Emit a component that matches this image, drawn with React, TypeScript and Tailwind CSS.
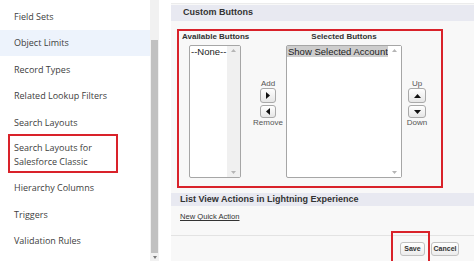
import React from "react";

const sideItems = [
  "Field Sets",
  "Object Limits",
  "Record Types",
  "Related Lookup Filters",
  "Search Layouts",
];
const sideItems2 = ["Hierarchy Columns", "Triggers", "Validation Rules"];

function Tri({ dir }: { dir: "up" | "down" | "left" | "right" }) {
  const pts =
    dir === "up"
      ? "0,4 3.5,0 7,4"
      : dir === "down"
      ? "0,0 3.5,4 7,0"
      : dir === "right"
      ? "0,0 4,3.5 0,7"
      : "4,0 0,3.5 4,7";
  const w = dir === "up" || dir === "down" ? 7 : 4;
  const h = dir === "up" || dir === "down" ? 4 : 7;
  return (
    <svg width={w} height={h} viewBox={`0 0 ${w} ${h}`}>
      <polygon points={pts} fill="#111" />
    </svg>
  );
}

function SmallBtn({ dir, w, h }: { dir: "up" | "down" | "left" | "right"; w: string; h: string }) {
  return (
    <div
      className={`${w} ${h} flex items-center justify-center rounded-[3px] border border-[#a9a9a9] bg-linear-to-b from-white to-[#e6e6e6]`}
    >
      <Tri dir={dir} />
    </div>
  );
}

function ScrollStrip({ gray }: { gray: boolean }) {
  return (
    <div
      className={`w-[13px] h-full flex flex-col items-center justify-between py-[3px] ${
        gray ? "bg-[#f0f0f0]" : "bg-white"
      }`}
    >
      <svg width="5" height="3" viewBox="0 0 5 3">
        <polygon points="0,3 2.5,0 5,3" fill="#b5b5b5" />
      </svg>
      <svg width="5" height="3" viewBox="0 0 5 3">
        <polygon points="0,0 2.5,3 5,0" fill="#b5b5b5" />
      </svg>
    </div>
  );
}

export default function App() {
  return (
    <div className="w-[474px] h-[261px] bg-white flex overflow-hidden">
      {/* Sidebar */}
      <div className="w-[150px] pt-[3px] text-[9px] text-[#404040] font-['Open_Sans',sans-serif]">
        {sideItems.map((t) => (
          <div
            key={t}
            className={`h-[26.5px] flex items-center pl-[14px] ${
              t === "Object Limits" ? "bg-[#edf3fc]" : ""
            }`}
          >
            {t}
          </div>
        ))}
        <div className="h-[40.5px] pl-[8px]">
          <div className="mt-[-1.5px] h-[39px] w-[110px] border-2 border-[#d9222a] pt-[5px] pl-[4px] leading-[14px]">
            <div>Search Layouts for</div>
            <div>Salesforce Classic</div>
          </div>
        </div>
        {sideItems2.map((t) => (
          <div key={t} className="h-[26.5px] flex items-center pl-[14px]">
            {t}
          </div>
        ))}
      </div>

      {/* Sidebar scrollbar */}
      <div className="w-[9px] h-full bg-[#f1f1f1] flex flex-col">
        <div className="h-[40px]" />
        <div className="mx-[1px] h-[213px] bg-[#c1c1c1]" />
        <div className="flex-1 flex items-center justify-center">
          <svg width="4" height="3" viewBox="0 0 4 3">
            <polygon points="0,0 2,3 4,0" fill="#7a7a7a" />
          </svg>
        </div>
      </div>
      <div className="w-[12px]" />

      {/* Main panel */}
      <div className="relative flex-1 mt-[3px] border-t border-[#ececec] bg-[#f8f8f8] font-['Liberation_Sans',Arial,sans-serif] text-[#333]">
        <div className="mt-[1px] h-[16px] bg-[#e8e9f1] flex items-center pl-[12px] text-[9px] font-bold text-[#333]">
          Custom Buttons
        </div>

        {/* Red annotated box */}
        <div className="mt-[8px] ml-[6px] w-[266px] h-[159px] border-2 border-[#d9222a] flex items-start">
          {/* Available */}
          <div className="ml-[3px] w-[71px] flex flex-col">
            <div className="h-[12px] leading-[12px] text-[8px] font-bold whitespace-nowrap text-[#333]">
              Available Buttons
            </div>
            <div className="mt-[2px] ml-[7px] w-[52px] h-[133px] border border-[#a6a6a6] rounded-[2px] bg-white flex">
              <div className="flex-1 text-[9.5px] leading-[11px] pl-[1px] text-[#222]">--None--</div>
              <ScrollStrip gray />
            </div>
          </div>

          {/* Add/Remove */}
          <div className="w-[30px] flex flex-col items-center pt-[48px] text-[8px] text-[#555]">
            <div className="h-[9px] leading-[9px]">Add</div>
            <SmallBtn dir="right" w="w-[16px]" h="h-[15px]" />
            <div className="h-[2px]" />
            <SmallBtn dir="left" w="w-[16px]" h="h-[13px]" />
            <div className="h-[10px] leading-[10px]">Remove</div>
          </div>

          {/* Selected */}
          <div className="ml-[3px] w-[116px] flex flex-col">
            <div className="h-[12px] leading-[12px] text-[8px] font-bold text-center whitespace-nowrap text-[#333]">
              Selected Buttons
            </div>
            <div className="mt-[2px] w-[116px] h-[133px] border border-[#a6a6a6] rounded-[2px] bg-white flex">
              <div className="flex-1">
                <div className="bg-[#cdcdcd] text-[9.5px] leading-[11px] pl-[1px] whitespace-nowrap text-[#222]">
                  Show Selected Account
                </div>
              </div>
              <ScrollStrip gray={false} />
            </div>
          </div>

          {/* Up/Down */}
          <div className="ml-[6px] w-[18px] flex flex-col items-center pt-[48px] text-[8px] text-[#555]">
            <div className="h-[9px] leading-[9px]">Up</div>
            <SmallBtn dir="up" w="w-[18px]" h="h-[15px]" />
            <div className="h-[2px]" />
            <SmallBtn dir="down" w="w-[18px]" h="h-[13px]" />
            <div className="h-[10px] leading-[10px]">Down</div>
          </div>
        </div>

        <div className="mt-[5px] h-[13px] bg-[#e8e9f1] flex items-center pl-[9px] text-[9px] font-bold text-[#333]">
          List View Actions in Lightning Experience
        </div>
        <div className="mt-[5px] h-[12px] flex items-center pl-[9px] text-[7.6px] underline text-[#333]">
          New Quick Action
        </div>
        <div className="mt-[12px] border-t border-[#e3e3e3]" />
        <div className="pt-[6px] flex justify-end pr-[15px] gap-[6px]">
          <div className="w-[25px] h-[14px] flex items-center justify-center rounded-[3px] border border-[#c2c2c2] bg-linear-to-b from-white to-[#ececec] text-[7px] font-bold text-[#333]">
            Save
          </div>
          <div className="w-[28px] h-[14px] flex items-center justify-center rounded-[3px] border border-[#c2c2c2] bg-linear-to-b from-white to-[#ececec] text-[7px] font-bold text-[#333]">
            Cancel
          </div>
        </div>

        {/* Save highlight annotation */}
        <div className="absolute left-[220px] top-[227px] w-[39px] h-[40px] border-2 border-[#d9222a]" />
      </div>
    </div>
  );
}
